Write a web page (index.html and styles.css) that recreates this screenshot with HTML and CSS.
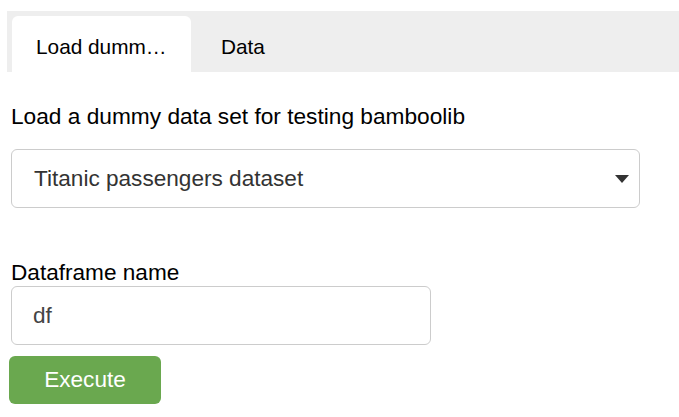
FILE: index.html
```html
<!DOCTYPE html>
<html>
<head>
<meta charset="utf-8">
<link rel="stylesheet" href="styles.css">
</head>
<body>
<div class="page">
  <div class="tabbar">
    <div class="tab active"><span class="tab-label">Load dumm…</span></div>
    <div class="tab"><span class="tab-label">Data</span></div>
  </div>
  <div class="panel">
    <div class="heading">Load a dummy data set for testing bamboolib</div>
    <div class="select">
      <span class="select-text">Titanic passengers dataset</span>
      <svg class="caret" width="14" height="8" viewBox="0 0 14 8"><path d="M0 0 H14 L7 8 Z" fill="#333"/></svg>
    </div>
    <div class="label">Dataframe name</div>
    <div class="input">df</div>
    <button class="btn">Execute</button>
  </div>
</div>
</body>
</html>
```

FILE: styles.css
```css
html, body {
  margin: 0;
  padding: 0;
  background: #fff;
}
body {
  font-family: "Liberation Sans", Arial, sans-serif;
  color: #000;
}
.page {
  padding-left: 7px;
}
.tabbar {
  margin-top: 11px;
  height: 61px;
  box-sizing: border-box;
  padding: 5px 0 0 5px;
  background: #eeeeee;
  display: flex;
  gap: 6px;
}
.tab {
  height: 56px;
  box-sizing: border-box;
  padding: 5px 24px 0 24px;
  display: flex;
  align-items: center;
  font-size: 20.8px;
  color: #000;
  white-space: nowrap;
}
.tab.active {
  width: 179px;
  padding-right: 12px;
  background: #fff;
  border-radius: 6px 6px 0 0;
}
.panel {
  padding-left: 4px;
  display: flex;
  flex-direction: column;
  align-items: flex-start;
}
.heading {
  margin-top: 28px;
  font-size: 22.7px;
  line-height: 32px;
}
.select {
  margin-top: 17px;
  width: 629px;
  height: 59px;
  box-sizing: border-box;
  border: 1px solid #cccccc;
  border-radius: 6px;
  padding: 0 10px 0 22px;
  display: flex;
  align-items: center;
  justify-content: space-between;
  font-size: 22.6px;
  color: #333;
}
.label {
  margin-top: 52px;
  font-size: 22.6px;
  line-height: 26px;
}
.input {
  width: 420px;
  height: 59px;
  box-sizing: border-box;
  border: 1px solid #cccccc;
  border-radius: 6px;
  padding: 0 21px;
  display: flex;
  align-items: center;
  font-size: 22.6px;
  color: #444;
}
.btn {
  margin-top: 11px;
  margin-left: -2px;
  width: 152px;
  height: 48px;
  border: none;
  border-radius: 6px;
  background: #6aa84f;
  color: #fff;
  font-family: "Liberation Sans", Arial, sans-serif;
  font-size: 22.6px;
  padding: 0;
}
```
